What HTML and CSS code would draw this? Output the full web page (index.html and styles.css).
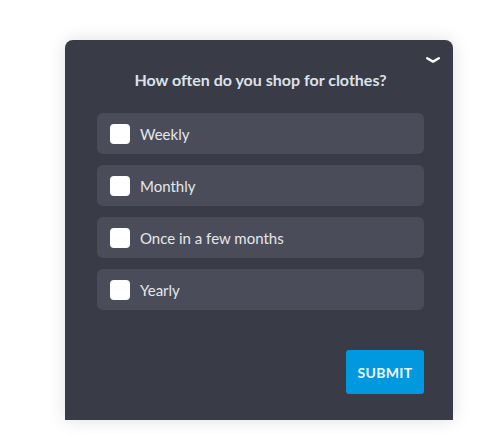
FILE: index.html
```html
<!DOCTYPE html>
<html>
<head>
<meta charset="utf-8">
<link rel="stylesheet" href="styles.css">
</head>
<body>
<div class="panel">
  <button class="collapse" aria-label="Collapse">
    <svg width="16" height="8" viewBox="0 0 16 8"><path d="M2.2 2.2 L8 5.6 L13.8 2.2" fill="none" stroke="#ffffff" stroke-width="2.4" stroke-linecap="round" stroke-linejoin="round"/></svg>
  </button>
  <h2 class="title">How often do you shop for clothes?</h2>
  <div class="options">
    <label class="option"><span class="box"></span><span class="label">Weekly</span></label>
    <label class="option"><span class="box"></span><span class="label">Monthly</span></label>
    <label class="option"><span class="box"></span><span class="label">Once in a few months</span></label>
    <label class="option"><span class="box"></span><span class="label">Yearly</span></label>
  </div>
  <div class="actions">
    <button class="submit">SUBMIT</button>
  </div>
</div>
</body>
</html>
```

FILE: styles.css
```css
html, body {
  margin: 0;
  padding: 0;
  background: #ffffff;
}
body {
  font-family: Lato, "Open Sans", sans-serif;
  padding: 40px 0 0 65px;
  height: 435px;
  box-sizing: border-box;
  overflow: hidden;
}
.panel {
  position: relative;
  width: 388px;
  height: 380px;
  box-sizing: border-box;
  background: #393c47;
  border-radius: 8px 8px 0 0;
  box-shadow: 0 0 18px rgba(0, 0, 0, 0.13);
  padding: 30px 29px 0 32px;
}
.collapse {
  position: absolute;
  top: 15px;
  right: 11px;
  width: 18px;
  height: 10px;
  padding: 0;
  margin: 0;
  border: 0;
  background: none;
  display: flex;
  align-items: center;
  justify-content: center;
}
.title {
  margin: 0 0 23px;
  font-size: 16px;
  line-height: 20px;
  font-weight: 700;
  color: #dde1e8;
  text-align: center;
}
.options {
  display: flex;
  flex-direction: column;
  gap: 11px;
}
.option {
  display: flex;
  align-items: center;
  height: 41px;
  padding-left: 13px;
  background: #4a4d59;
  border-radius: 6px;
}
.box {
  width: 20px;
  height: 20px;
  background: #ffffff;
  border-radius: 4px;
  flex: none;
}
.label {
  margin-left: 10px;
  font-size: 15px;
  color: #e4e6ea;
}
.actions {
  display: flex;
  justify-content: flex-end;
  margin-top: 40px;
}
.submit {
  width: 78px;
  height: 44px;
  border: 0;
  border-radius: 3px;
  background: #0098de;
  color: #eef6fb;
  font-family: Lato, "Open Sans", sans-serif;
  font-size: 14px;
  font-weight: 700;
  letter-spacing: 0.3px;
  padding: 0;
}
```
